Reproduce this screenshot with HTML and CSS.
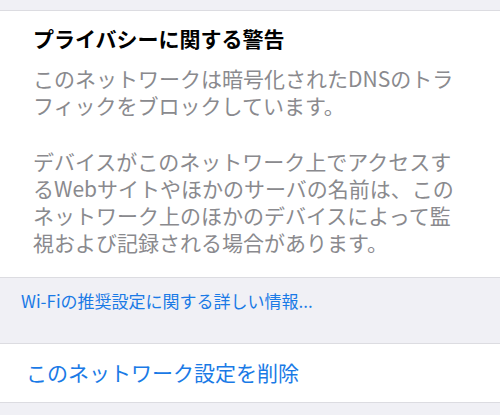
FILE: index.html
```html
<!DOCTYPE html>
<html lang="ja">
<head>
    <meta charset="UTF-8">
    <meta name="viewport" content="width=device-width, initial-scale=1.0">
    <title>プライバシーに関する警告</title>
    <link rel="stylesheet" href="styles.css">
</head>
<body>
    <div class="top-gap"></div>

    <div class="group warning">
        <h2 class="warning-title">プライバシーに関する警告</h2>
        <p class="warning-text">このネットワークは暗号化されたDNSのトラフィックをブロックしています。</p>
        <p class="warning-text">デバイスがこのネットワーク上でアクセスするWebサイトやほかのサーバの名前は、このネットワーク上のほかのデバイスによって監視および記録される場合があります。</p>
    </div>

    <div class="footer-note">
        <a href="#" class="note-link">Wi-Fiの推奨設定に関する詳しい情報...</a>
    </div>

    <div class="group">
        <a href="#" class="cell-action">このネットワーク設定を削除</a>
    </div>
</body>
</html>
```

FILE: styles.css
```css
body {
    font-family: "Noto Sans CJK JP", "Noto Sans", sans-serif;
    background: #f0f0f5;
    margin: 0;
    padding: 0;
}
a {
    text-decoration: none;
}
.top-gap {
    height: 10px;
}
.group {
    background: white;
    border-top: 1px solid #dcdce1;
    border-bottom: 1px solid #dcdce1;
}
.warning {
    padding: 12px 30px 22px 33px;
}
.warning-title {
    margin: 0 0 12px 0;
    font-size: 21px;
    line-height: 30px;
    font-weight: bold;
    color: #000;
}
.warning-text {
    margin: 0 0 30px 0;
    font-size: 21px;
    line-height: 26.7px;
    color: #8a8a8e;
}
.warning-text:last-child {
    margin-bottom: 0;
}
.footer-note {
    height: 65px;
    padding: 11px 21px 0 21px;
    box-sizing: border-box;
}
.note-link {
    font-size: 17px;
    line-height: 24px;
    color: #1a7ae6;
}
.cell-action {
    display: block;
    padding: 15px 26px 17px 26px;
    font-size: 21px;
    line-height: 26px;
    color: #1a7ae6;
}
```
